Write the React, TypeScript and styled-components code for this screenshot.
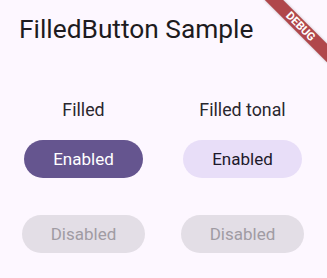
import React from "react";
import styled, { createGlobalStyle } from "styled-components";

const GlobalStyle = createGlobalStyle`
  html, body {
    margin: 0;
    padding: 0;
    background: #fdf7ff;
  }
  body {
    font-family: Roboto, "Noto Sans", sans-serif;
    -webkit-font-smoothing: antialiased;
  }
`;

const App = () => {
  return (
    <Page>
      <GlobalStyle />
      <AppBar>
        <Title>FilledButton Sample</Title>
      </AppBar>
      <Wrapper>
        <Col>
          <Label>Filled</Label>
          <Button variant="filled">Enabled</Button>
          <Button variant="filled" disabled>
            Disabled
          </Button>
        </Col>
        <Col>
          <Label>Filled tonal</Label>
          <Button variant="tonal">Enabled</Button>
          <Button variant="tonal" disabled>
            Disabled
          </Button>
        </Col>
      </Wrapper>
      <Banner>
        <span>DEBUG</span>
      </Banner>
    </Page>
  );
};

export default App;

const Page = styled.div`
  position: relative;
  width: 327px;
  height: 278px;
  overflow: hidden;
  background: #fdf7ff;
`;

const AppBar = styled.div`
  height: 60px;
  display: flex;
  align-items: center;
  padding-left: 19px;
`;

const Title = styled.h1`
  margin: 0;
  font-size: 26.3px;
  line-height: 30px;
  font-weight: 400;
  color: #1d1b20;
  margin-top: -3px;
`;

const Wrapper = styled.div`
  display: flex;
  padding-left: 22px;
  gap: 36px;
  margin-top: 40px;
`;

const Col = styled.div`
  width: 123px;
  display: flex;
  flex-direction: column;
  align-items: center;
`;

const Label = styled.div`
  font-size: 17.8px;
  color: #2a272e;
  line-height: 20px;
  height: 20px;
`;

const Button = styled.button<{ variant: "filled" | "tonal" }>`
  height: 38px;
  padding: 0 29px;
  border: none;
  border-radius: 19px;
  font-family: Roboto, "Noto Sans", sans-serif;
  font-size: 17px;
  font-weight: 400;
  margin-top: ${(p) => (p.disabled ? "37px" : "20px")};
  background: ${(p) => (p.variant === "filled" ? "#65558f" : "#e8def8")};
  color: ${(p) => (p.variant === "filled" ? "#ffffff" : "#1d192b")};
  &:disabled {
    background: #e3dee6;
    color: #a09ba3;
  }
`;

const Banner = styled.div`
  position: absolute;
  left: 256px;
  top: 20px;
  width: 89px;
  height: 13px;
  background: #b0474b;
  box-shadow: 0 0 3px rgba(0, 0, 0, 0.25);
  transform: rotate(45deg);
  display: flex;
  align-items: center;
  justify-content: center;
  span {
    color: #ffffff;
    font-size: 11.3px;
    font-weight: 700;
    line-height: 13px;
  }
`;
